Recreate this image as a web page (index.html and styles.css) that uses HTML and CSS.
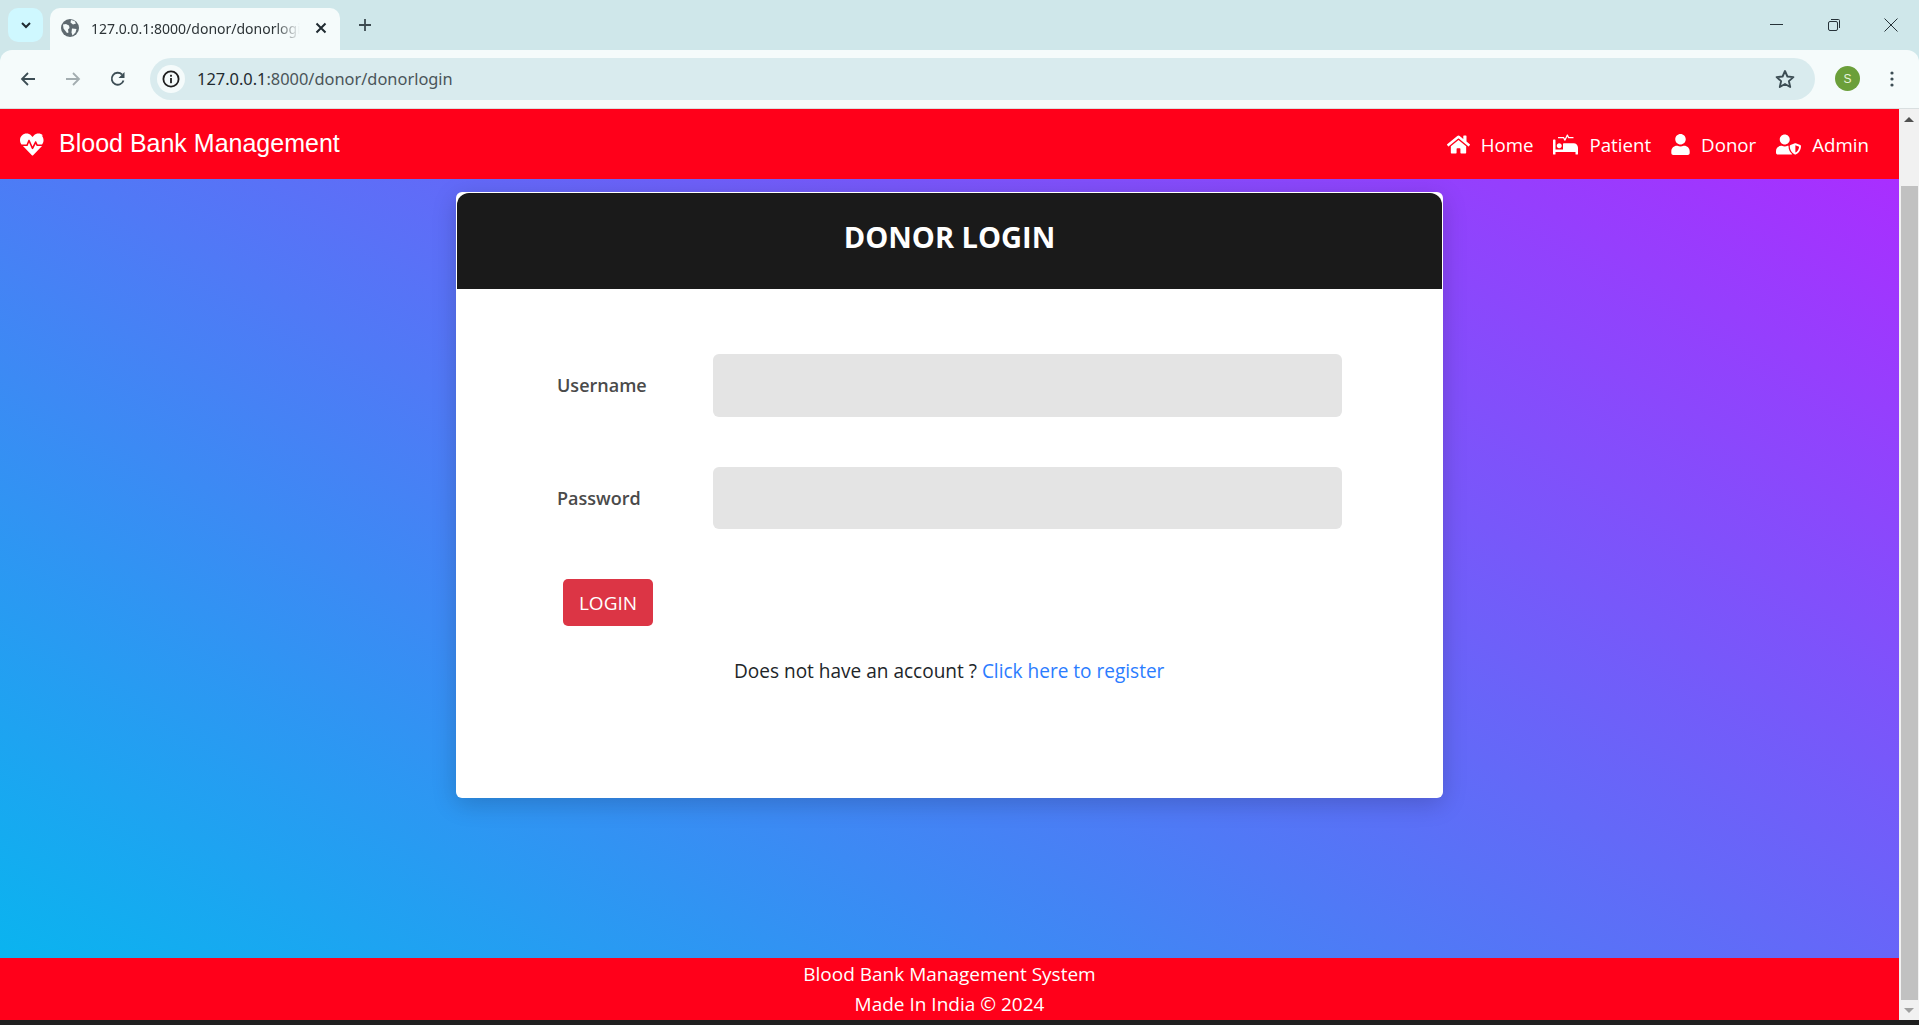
FILE: index.html
```html
<!DOCTYPE html>
<html lang="en">
<head>
<meta charset="utf-8">
<title>Donor Login</title>
<link rel="stylesheet" href="styles.css">
</head>
<body>
<header class="browser">
  <div class="tabstrip">
    <button class="tabsearch"><svg class="ico-14" viewBox="0 0 14 14"><path d="M3 5l4 4 4-4" fill="none" stroke="#1f2a30" stroke-width="2"/></svg></button>
    <div class="tab">
      <svg class="globe" viewBox="0 0 18 18"><circle cx="9" cy="9" r="9" fill="#5f6a70"/><path d="M2 5.500l3-.5 3 1.500.5 2.500-1.500 1.500.5 3-1.500.5-3.500-4.500zM10 1l3.500 1 1.500 2.500-3 1-2.500-2zM11 9.500l4.500.5-1 3.500-3 3-1-3z" fill="#f5fbfb"/></svg>
      <span class="tabtitle">127.0.0.1:8000/donor/donorlogin</span>
      <svg class="ico-14" viewBox="0 0 14 14"><path d="M2.500 2.500l9 9M11.500 2.500l-9 9" stroke="#1f2a30" stroke-width="2"/></svg>
    </div>
    <svg class="newtab" viewBox="0 0 12 12"><path d="M6 0v12M0 6h12" stroke="#3c4a50" stroke-width="1.800"/></svg>
    <div class="winctrls">
      <svg class="winbtn" viewBox="0 0 14 14"><path d="M0 6.500h13" stroke="#263238" stroke-width="1"/></svg>
      <svg class="winbtn" viewBox="0 0 14 14"><rect x="1.500" y="3.500" width="9" height="9" rx="1.500" fill="none" stroke="#263238" stroke-width="1"/><path d="M4 1.500h7.500a1 1 0 0 1 1 1V10" fill="none" stroke="#263238" stroke-width="1"/></svg>
      <svg class="winbtn" viewBox="0 0 14 14"><path d="M.5.5l13 13M13.500.5l-13 13" stroke="#263238" stroke-width="1"/></svg>
    </div>
  </div>
  <div class="toolbar">
    <svg class="tool" viewBox="0 0 16 16"><path d="M15 8H2M8 2L2 8l6 6" fill="none" stroke="#3c4d54" stroke-width="1.800"/></svg>
    <svg class="tool" viewBox="0 0 16 16"><path d="M1 8h13M8 2l6 6-6 6" fill="none" stroke="#a3adb0" stroke-width="1.800"/></svg>
    <svg class="tool" viewBox="0 0 16 16"><path d="M13.500 9.500A6 6 0 1 1 12 3.500" fill="none" stroke="#3c4d54" stroke-width="1.800"/><path d="M14.500 1v6h-6z" fill="#3c4d54"/></svg>
    <div class="omnibox">
      <span class="siteinfo"><svg class="ico-18" viewBox="0 0 18 18"><circle cx="9" cy="9" r="7.600" fill="none" stroke="#1f1f1f" stroke-width="1.800"/><rect x="8.100" y="8" width="1.800" height="5.200" fill="#1f1f1f"/><rect x="8.100" y="4.800" width="1.800" height="1.900" fill="#1f1f1f"/></svg></span>
      <span class="url"><span class="urlhost">127.0.0.1</span>:8000/donor/donorlogin</span>
      <svg class="star" viewBox="0 0 20 20"><path d="M10 2l2.400 5.500 6 .6-4.500 4 1.300 5.900L10 15l-5.200 3 1.300-5.900-4.500-4 6-.6z" fill="none" stroke="#3c4d54" stroke-width="1.900" stroke-linejoin="round"/></svg>
    </div>
    <span class="avatar">S</span>
    <svg class="kebab" viewBox="0 0 4 16"><circle cx="2" cy="2" r="1.600"/><circle cx="2" cy="8" r="1.600"/><circle cx="2" cy="14" r="1.600"/></svg>
  </div>
</header>
<div class="viewport">
  <div class="page">
    <nav class="navbar">
      <a class="brand">
        <svg class="brandicon" viewBox="0 0 512 512"><path d="M320.200 243.800l-49.700 99.400c-6 12.100-23.400 11.700-28.900-.6l-56.900-126.300-30 71.700H60.600l182.500 186.500c7.100 7.300 18.600 7.300 25.700 0L451.400 288H342.300l-22.100-44.200zM473.700 73.900l-2.400-2.500c-51.500-52.600-135.800-52.600-187.400 0L256 100l-27.900-28.500c-51.500-52.700-135.900-52.700-187.400 0l-2.400 2.400C-10.400 123.700-12.500 203 31 256h102.400l35.900-86.200c5.400-12.900 23.600-13.200 29.400-.4l58.200 129.300 49-97.900c5.900-11.800 22.700-11.800 28.600 0l27.600 55.200h88.900c43.400-53 41.300-132.300-7.300-182.100z"/></svg>
        <span class="brandname">Blood Bank Management</span>
      </a>
      <ul class="navlinks">
        <li><a class="navlink"><svg class="navicon home" viewBox="0 0 576 512"><path d="M280.370 148.260L96 300.110V464a16 16 0 0 0 16 16l112.060-.29a16 16 0 0 0 15.920-16V368a16 16 0 0 1 16-16h64a16 16 0 0 1 16 16v95.640a16 16 0 0 0 16 16.050L464 480a16 16 0 0 0 16-16V300L295.670 148.260a12.190 12.190 0 0 0-15.300 0zM571.600 251.470L488 182.560V44.050a12 12 0 0 0-12-12h-56a12 12 0 0 0-12 12v72.610L318.470 43a48 48 0 0 0-61 0L4.340 251.470a12 12 0 0 0-1.600 16.900l25.500 31A12 12 0 0 0 45.150 301l235.220-193.740a12.190 12.190 0 0 1 15.300 0L530.900 301a12 12 0 0 0 16.900-1.600l25.500-31a12 12 0 0 0-1.700-16.930z"/></svg>Home</a></li>
        <li><a class="navlink"><svg class="navicon wide" viewBox="0 0 640 512"><path d="M528 224H272c-8.800 0-16 7.200-16 16v144H64V144c0-8.800-7.200-16-16-16H16c-8.800 0-16 7.200-16 16v352c0 8.800 7.200 16 16 16h32c8.800 0 16-7.200 16-16v-48h512v48c0 8.800 7.200 16 16 16h32c8.800 0 16-7.200 16-16V336c0-61.900-50.100-112-112-112zM136 96h126.100l27.600 55.200c5.900 11.800 22.700 11.800 28.600 0L368 51.800 390.100 96H512c8.800 0 16-7.200 16-16s-7.200-16-16-16H409.900L382.300 8.800C376.400-3 359.600-3 353.700 8.800L304 108.200l-19.900-39.800c-1.400-2.700-4.100-4.400-7.200-4.400H136c-4.400 0-8 3.600-8 8v16c0 4.400 3.600 8 8 8zm24 256c35.300 0 64-28.700 64-64s-28.700-64-64-64-64 28.700-64 64 28.700 64 64 64z"/></svg>Patient</a></li>
        <li><a class="navlink"><svg class="navicon user" viewBox="0 0 448 512"><path d="M224 256c70.700 0 128-57.300 128-128S294.700 0 224 0 96 57.300 96 128s57.300 128 128 128zm89.600 32h-16.700c-22.200 10.200-46.900 16-72.900 16s-50.600-5.800-72.900-16h-16.700C60.200 288 0 348.200 0 422.400V464c0 26.500 21.500 48 48 48h352c26.500 0 48-21.500 48-48v-41.600c0-74.200-60.200-134.400-134.400-134.400z"/></svg>Donor</a></li>
        <li><a class="navlink"><svg class="navicon wide" viewBox="0 0 640 512"><path d="M622.300 271.100l-115.200-45c-4.100-1.600-12.600-3.700-22.200 0l-115.200 45c-10.700 4.200-17.700 14-17.700 24.900 0 111.600 68.700 188.800 132.900 213.900 9.600 3.700 18 1.600 22.200 0C558.400 489.900 640 420.500 640 296c0-10.900-7-20.700-17.700-24.900zM496 462.400V273.300l95.500 37.300c-5.600 87.100-60.900 135.400-95.500 151.800zM224 256c70.700 0 128-57.300 128-128S294.700 0 224 0 96 57.300 96 128s57.300 128 128 128zm96 40c0-2.500.8-4.800 1.100-7.200-2.500-.1-4.900-.8-7.500-.8h-16.700c-22.200 10.200-46.900 16-72.900 16s-50.600-5.800-72.900-16h-16.700C60.200 288 0 348.200 0 422.400V464c0 26.500 21.500 48 48 48h352c6.800 0 13.300-1.500 19.200-4-54-42.900-99.200-116.700-99.200-212z"/></svg>Admin</a></li>
      </ul>
    </nav>
    <main class="content">
      <section class="card">
        <h1 class="cardhead">DONOR LOGIN</h1>
        <form class="cardbody">
          <div class="field">
            <label class="fieldlabel">Username</label>
            <input class="fieldinput" type="text">
          </div>
          <div class="field">
            <label class="fieldlabel">Password</label>
            <input class="fieldinput" type="password">
          </div>
          <button class="loginbtn" type="button">LOGIN</button>
          <p class="register">Does not have an account ? <a class="reglink">Click here to register</a></p>
        </form>
      </section>
    </main>
    <footer class="footer">
      <p>Blood Bank Management System</p>
      <p>Made In India © 2024</p>
    </footer>
  </div>
  <div class="scrollbar">
    <svg class="arrow" viewBox="0 0 10 6"><path d="M5 0l5 5H0z" fill="#505050"/></svg>
    <div class="thumb"></div>
    <svg class="arrow down" viewBox="0 0 10 6"><path d="M5 5l5-5H0z" fill="#a0a0a0"/></svg>
  </div>
</div>
<div class="taskstrip"></div>
</body>
</html>
```
FILE: styles.css
```css
* { box-sizing: border-box; }
html, body { margin: 0; height: 100%; overflow: hidden; }
body { display: flex; flex-direction: column; height: 1025px; font-family: "Open Sans", "Noto Sans", sans-serif; }
button { font: inherit; border: 0; padding: 0; }

.browser { flex: none; background: #cfe7ea; }
.tabstrip { height: 50px; display: flex; align-items: flex-end; padding-left: 8px; }
.tabsearch { width: 35px; height: 34px; margin-bottom: 8px; border-radius: 10px; background: #cff8ff; display: flex; align-items: center; justify-content: center; }
.ico-14 { width: 14px; height: 14px; flex: none; }
.ico-18 { width: 18px; height: 18px; }
.tab { width: 290px; height: 42px; margin-left: 7px; border-radius: 10px 10px 0 0; background: #f5fbfb; display: flex; align-items: center; padding: 0 12px 2px 11px; }
.globe { width: 18px; height: 18px; flex: none; }
.tabtitle { font-family: "Noto Sans", sans-serif; font-size: 14px; color: #2c3336; margin-left: 12px; width: 210px; white-space: nowrap; overflow: hidden; margin-right: 14px; -webkit-mask-image: linear-gradient(to right, #000 88%, transparent 100%); mask-image: linear-gradient(to right, #000 88%, transparent 100%); }
.newtab { width: 12px; height: 12px; margin: 0 0 19px 19px; }
.winctrls { margin-left: auto; margin-bottom: 18px; display: flex; gap: 43px; padding-right: 21px; }
.winbtn { width: 14px; height: 14px; }

.toolbar { height: 59px; background: #f5fbfb; border-radius: 12px 12px 0 0; border-bottom: 1px solid #d9dfe0; display: flex; align-items: center; padding: 0 16px 1px 20px; }
.tool { width: 16px; height: 16px; margin-right: 29px; flex: none; }
.tool:nth-child(3) { margin-right: 24px; }
.omnibox { width: 1665px; height: 42px; border-radius: 21px; background: #d9ebee; display: flex; align-items: center; padding: 0 20px 0 7px; }
.siteinfo { width: 28px; height: 28px; border-radius: 50%; background: #f5fbfb; display: flex; align-items: center; justify-content: center; flex: none; }
.url { font-family: "Noto Sans", sans-serif; font-size: 16.400px; color: #4a5559; margin-left: 12px; }
.urlhost { color: #1f2a30; }
.star { width: 20px; height: 20px; margin-left: auto; }
.avatar { width: 25px; height: 25px; border-radius: 50%; background: #6b9f3a; color: #e8f3dc; font-family: "Liberation Sans", sans-serif; font-size: 12px; display: flex; align-items: center; justify-content: center; margin-left: 20px; flex: none; }
.kebab { width: 4px; height: 16px; fill: #3c4d54; margin-left: 30px; flex: none; }

.viewport { flex: 1; min-height: 0; display: flex; }
.page { flex: 1; min-width: 0; display: flex; flex-direction: column; }
.navbar { flex: none; height: 70px; background: #ff001a; color: #fff; display: flex; align-items: center; justify-content: space-between; padding: 0 30px 0 20px; }
.brand { display: flex; align-items: center; gap: 14px; font-family: "Liberation Sans", sans-serif; font-size: 25px; }
.brandname { padding-bottom: 2px; }
.brandicon { width: 25px; height: 25px; fill: #fff; }
.navlinks { display: flex; list-style: none; margin: 0; padding: 0; gap: 20px; }
.navlink { display: flex; align-items: center; font-size: 18.700px; }
.navicon { height: 21px; fill: #fff; margin-right: 11px; }
.navicon.home { width: 23px; }
.navicon.wide { width: 25px; }
.navicon.user { width: 19px; }

.content { flex: 1; min-height: 0; padding-top: 13px; display: flex; justify-content: center; align-items: flex-start; background: linear-gradient(30deg, #0ab4ef 0%, #a92eff 100%); }
.card { width: 987px; height: 606px; background: #fff; border-radius: 6px; box-shadow: 0 6px 24px rgba(0,0,0,.18); overflow: hidden; padding: 1px 1px 0; }
.cardhead { height: 96px; margin: 0; padding-bottom: 9px; background: #1a1a1a; color: #fff; font-size: 29px; font-weight: 700; display: flex; align-items: center; justify-content: center; border-radius: 12px 12px 0 0; }
.cardbody { padding: 65px 99px 0 100px; }
.field { display: flex; align-items: center; height: 63px; margin-bottom: 50px; }
.field + .field { margin-bottom: 49px; align-items: flex-start; }
.field + .field .fieldlabel { align-self: center; }
.field + .field .fieldinput { height: 62px; }
.fieldlabel { width: 156px; font-size: 18px; font-weight: 600; color: #4a4a4a; padding-bottom: 2px; }
.fieldinput { width: 629px; height: 63px; border: 0; border-radius: 6px; background: #e4e4e4; }
.loginbtn { display: block; width: 90px; height: 47px; margin-left: 6px; background: #dc3545; color: #fff; font-size: 19px; border-radius: 5px; }
.register { margin: 32px 0 0; padding-left: 177px; font-size: 19.050px; color: #212529; }
.reglink { color: #2b7cff; }

.footer { flex: none; height: 62px; padding-top: 1px; background: #ff001a; color: #fff; text-align: center; font-size: 19px; }
.footer p { margin: 0; line-height: 30px; }

.scrollbar { flex: none; width: 20px; background: #f1f1f1; display: flex; flex-direction: column; align-items: center; }
.arrow { width: 10px; height: 6px; margin-top: 8px; flex: none; }
.arrow.down { margin: 8px 0 6px; }
.thumb { width: 17px; flex: 1; margin-top: 63px; background: #c1c1c1; }
.taskstrip { flex: none; height: 5px; background: #1f1f1f; }
```
